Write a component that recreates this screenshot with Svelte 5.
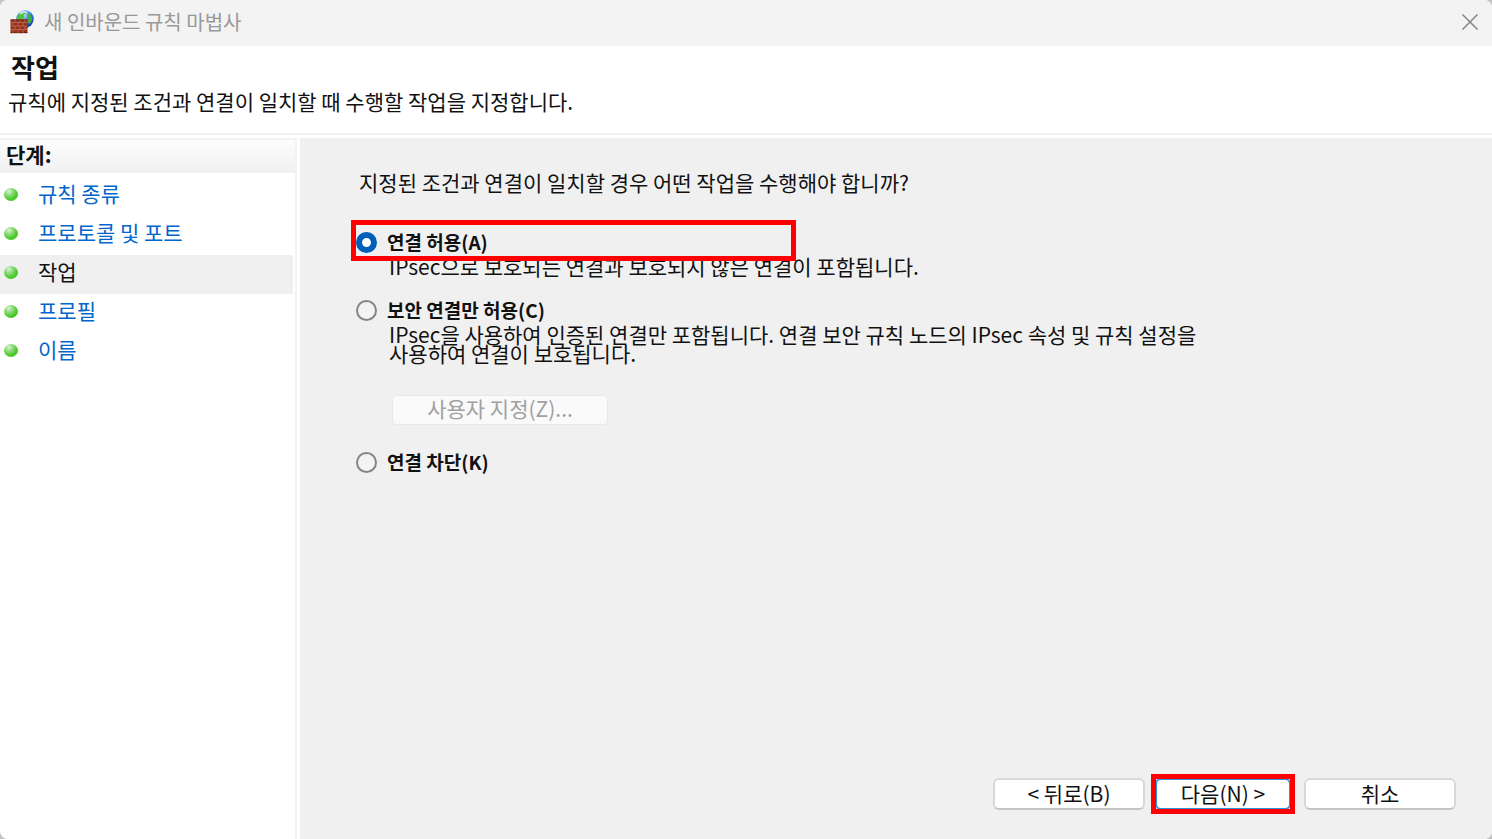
<script>
  const steps = [
    { label: '규칙 종류' },
    { label: '프로토콜 및 포트' },
    { label: '작업', current: true },
    { label: '프로필' },
    { label: '이름' }
  ];
  let action = $state('allow');
</script>

<div class="window">
  <header class="titlebar">
    <svg class="app-icon" viewBox="0 0 24 24" aria-hidden="true">
      <defs>
        <radialGradient id="globe" cx="0.4" cy="0.25" r="0.8">
          <stop offset="0" stop-color="#d4ecff" />
          <stop offset="0.45" stop-color="#3f8fe4" />
          <stop offset="1" stop-color="#0b2f9c" />
        </radialGradient>
      </defs>
      <circle cx="15" cy="9" r="8.7" fill="url(#globe)" />
      <path d="M8 5.500l3-3 3.500-1 1 2-2 2 1 2-3 3-3 1-2-2z" fill="#4fc23a" />
      <path d="M18.500 3.500l2.500 2 1 4-1 3-2 1.500-1.500-3 1-3-1.500-2z" fill="#3fae3c" />
      <path d="M10 2.500q4-2.500 8 0-4 0-8 2z" fill="#fff" opacity="0.7" />
      <rect x="0.500" y="9.500" width="17" height="13.500" fill="#963019" />
      <path d="M0.500 10h17M0.500 22.700h17" stroke="#702311" stroke-width="1" />
      <path d="M1 12.500h16M1 16h16M1 19.500h16M5 10v2.500M10 10v2.500M15 10v2.500M3 12.500V16M8 12.500V16M13 12.500V16M5 16v3.500M10 16v3.500M15 16v3.500M3 19.500V23M8 19.500V23M13 19.500V23" stroke="#c27a60" stroke-width="0.700" fill="none" />
    </svg>
    <span class="title">새 인바운드 규칙 마법사</span>
    <button class="close" type="button" aria-label="닫기">
      <svg viewBox="0 0 18 18" aria-hidden="true">
        <path d="M1.500 1.500l15 15M16.500 1.500l-15 15" stroke="#858585" stroke-width="1.500" fill="none" />
      </svg>
    </button>
  </header>

  <section class="heading">
    <h1>작업</h1>
    <p>규칙에 지정된 조건과 연결이 일치할 때 수행할 작업을 지정합니다.</p>
  </section>

  <div class="body">
    <nav class="sidebar" aria-labelledby="steps-title">
      <h2 id="steps-title">단계:</h2>
      <ul>
        {#each steps as step}
          <li class:current={step.current}>
            <span class="bullet"></span>
            {#if step.current}
              <span class="step">{step.label}</span>
            {:else}
              <a class="step" href="#step">{step.label}</a>
            {/if}
          </li>
        {/each}
      </ul>
    </nav>

    <main>
      <fieldset>
        <legend>지정된 조건과 연결이 일치할 경우 어떤 작업을 수행해야 합니까?</legend>

        <div class="option marked">
          <label><input type="radio" name="action" value="allow" bind:group={action} />연결 허용(A)</label>
          <p>IPsec으로 보호되는 연결과 보호되지 않은 연결이 포함됩니다.</p>
        </div>

        <div class="option">
          <label><input type="radio" name="action" value="secure" bind:group={action} />보안 연결만 허용(C)</label>
          <p>IPsec을 사용하여 인증된 연결만 포함됩니다. 연결 보안 규칙 노드의 IPsec 속성 및 규칙 설정을 사용하여 연결이 보호됩니다.</p>
          <button class="customize" type="button" disabled>사용자 지정(Z)...</button>
        </div>

        <div class="option">
          <label><input type="radio" name="action" value="block" bind:group={action} />연결 차단(K)</label>
        </div>
      </fieldset>

      <footer>
        <button type="button">&lt; 뒤로(B)</button>
        <div class="next"><button class="default" type="button">다음(N) &gt;</button></div>
        <button type="button">취소</button>
      </footer>
    </main>
  </div>
</div>

<style>
  :global(body) {
    margin: 0;
    background: #c4c4c4;
  }
  .window {
    box-sizing: border-box;
    min-height: 100vh;
    display: flex;
    flex-direction: column;
    overflow: hidden;
    border-radius: 8px;
    background: #fff;
    color: #111;
    font-family: 'Noto Sans CJK KR', sans-serif;
    font-size: 21px;
    font-weight: 400;
    line-height: 28px;
    word-break: keep-all;
  }
  h1, h2, p, ul {
    margin: 0;
    padding: 0;
  }
  button {
    font: inherit;
    color: inherit;
  }
  .titlebar {
    box-sizing: border-box;
    display: flex;
    align-items: center;
    height: 46px;
    padding: 0 12px 2px 10px;
    background: #f3f3f3;
  }
  .app-icon {
    width: 24px;
    height: 24px;
    margin-right: 10px;
  }
  .title {
    flex: 1;
    color: #999;
    font-size: 20px;
  }
  .close {
    display: flex;
    padding: 0;
    border: 0;
    background: none;
  }
  .close svg {
    width: 20px;
    height: 18px;
  }
  .heading {
    padding: 5px 8px 18px;
    border-bottom: 2px solid #f0f0f0;
  }
  h1 {
    padding: 0 3px;
    font-size: 26px;
    font-weight: 700;
    line-height: 32px;
  }
  .heading p {
    padding-top: 4px;
  }
  .body {
    flex: 1;
    display: flex;
    padding-top: 3px;
  }
  .sidebar {
    flex: 0 0 295px;
    margin-right: 3px;
    border-right: 2px solid #f3f3f3;
  }
  h2 {
    box-sizing: border-box;
    height: 35px;
    padding-left: 6px;
    border-top: 2px solid #f3f3f3;
    background: linear-gradient(#fdfdfd, #f0f0f0);
    font-size: 21px;
    font-weight: 700;
  }
  ul {
    padding-top: 4px;
    list-style: none;
  }
  li {
    box-sizing: border-box;
    display: flex;
    align-items: center;
    height: 39px;
    margin-right: 2px;
    padding: 0 0 4px 4px;
  }
  .current {
    background: #f0f0f0;
  }
  .bullet {
    width: 14px;
    height: 13px;
    margin-right: 20px;
    border-radius: 50%;
    background: radial-gradient(circle at 35% 25%, #d9f0d4 0%, #8edb7c 30%, #4ccb2c 60%, #3bbf24 100%);
  }
  .step {
    padding-bottom: 4px;
  }
  a {
    color: #0066cc;
    text-decoration: none;
  }
  main {
    flex: 1;
    min-width: 0;
    display: flex;
    flex-direction: column;
    justify-content: space-between;
    padding: 30px 36px 29px 56px;
    background: #f0f0f0;
  }
  fieldset {
    max-width: 864px;
    margin: 0;
    padding: 0;
    border: 0;
  }
  legend {
    padding: 0 0 32px 3px;
  }
  .option {
    position: relative;
    margin-bottom: 14px;
  }
  label {
    display: flex;
    align-items: center;
    gap: 10px;
    font-size: 19px;
    font-weight: 700;
  }
  input {
    appearance: none;
    box-sizing: border-box;
    width: 21px;
    height: 21px;
    margin: 0;
    border: 2px solid #858585;
    border-radius: 50%;
    background: #f3f3f3;
  }
  input:checked {
    border: 6px solid #005fb8;
    background: #fff;
  }
  .option p {
    padding: 1px 0 6px 33px;
    line-height: 19px;
  }
  .marked::after {
    content: '';
    position: absolute;
    box-sizing: border-box;
    left: -5px;
    top: -8px;
    width: 445px;
    height: 41px;
    border: 5px solid #f00;
  }
  .customize {
    display: block;
    box-sizing: border-box;
    width: 216px;
    height: 30px;
    margin: 26px 0 23px 36px;
    padding: 0 0 4px;
    border: 1px solid #e8e8e8;
    border-radius: 5px;
    background: #fafafa;
    color: #a0a0a0;
    line-height: 24px;
  }
  footer {
    display: flex;
    justify-content: flex-end;
    gap: 10px;
  }
  footer button {
    box-sizing: border-box;
    width: 152px;
    height: 32px;
    padding: 0 0 2px;
    border: 2px solid #d8d8d8;
    border-bottom-color: #c4c4c4;
    border-radius: 6px;
    background: #fff;
    line-height: 26px;
  }
  .next {
    position: relative;
    display: flex;
    margin-right: 3px;
  }
  footer .default {
    width: 136px;
    border-color: #2f93e0;
  }
  .next::after {
    content: '';
    position: absolute;
    inset: -4px;
    border: 5px solid #f00;
    pointer-events: none;
  }
</style>
